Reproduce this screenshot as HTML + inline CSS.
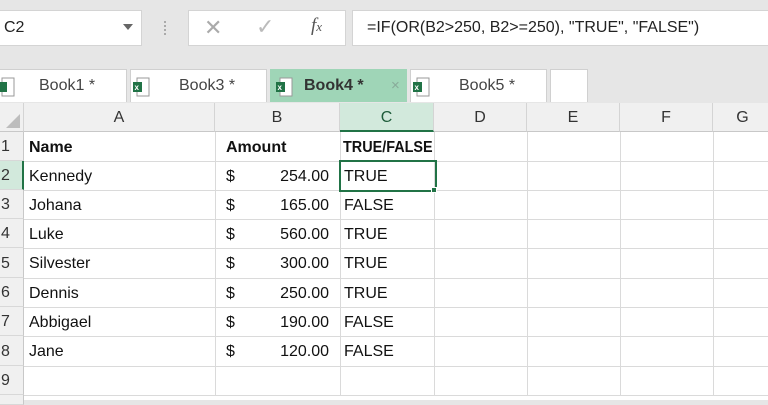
<!DOCTYPE html>
<html><head><style>
*{margin:0;padding:0;box-sizing:border-box}
body{width:768px;height:400px;overflow:hidden;background:#e6e6e6;font-family:"Liberation Sans",sans-serif;position:relative;color:#222}
.a{position:absolute}
.box{background:#fff;border:1px solid #d4d4d4}
.tab{position:absolute;top:69px;height:33px;background:#fff;border:1px solid #d0d0d0;border-bottom:none;font-size:16px;color:#444;line-height:32px}
.ic{position:absolute;top:7px;width:17px;height:20px}
.hdr{position:absolute;top:103px;height:29px;background:#f0f0f0;border-right:1px solid #d4d4d4;border-bottom:1px solid #c8c8c8;text-align:center;font-size:16px;line-height:29px;color:#333}
.rh{position:absolute;left:0;width:24px;background:#f0f0f0;border-right:1px solid #c8c8c8;border-bottom:1px solid #d8d8d8;font-size:16px;color:#333;padding-left:1px}
.vl{position:absolute;top:132px;width:1px;height:268px;background:#dadada}
.hl{position:absolute;left:24px;width:744px;height:1px;background:#dadada}
.t{position:absolute;font-size:16px;color:#111}
</style></head><body>
<div class="a box" style="left:-2px;top:10px;width:144px;height:36px;font-size:16px;line-height:34px;padding-left:5px;color:#222">C2</div>
<div class="a" style="left:123px;top:24px;width:0;height:0;border-left:5px solid transparent;border-right:5px solid transparent;border-top:6px solid #666"></div>
<div class="a" style="left:164px;top:21px;width:2px;height:14px;border-left:2px dotted #aaa"></div>
<div class="a box" style="left:188px;top:10px;width:158px;height:36px"></div>
<div class="a" style="left:204px;top:15px;font-size:22px;color:#aaa">✕</div>
<div class="a" style="left:256px;top:14px;font-size:22px;color:#bbb">✓</div>
<div class="a" style="left:311px;top:15px;font-size:19px;font-style:italic;font-family:'Liberation Serif',serif;color:#555">f<span style="font-size:13px">x</span></div>
<div class="a box" style="left:352px;top:10px;width:420px;height:36px;font-size:16px;line-height:34px;padding-left:14px;color:#222">=IF(OR(B2&gt;250, B2&gt;=250), "TRUE", "FALSE")</div>

<div class="tab" style="left:-3px;width:130px"><div class="ic" style="left:0"><svg width="17" height="20"><rect x="4" y="1" width="12" height="18" fill="#fff" stroke="#999"/><rect x="0" y="5" width="9" height="10" fill="#217346"/></svg></div><span style="position:absolute;left:41px">Book1 *</span></div>
<div class="tab" style="left:130px;width:137px"><div class="ic" style="left:2px"><svg width="17" height="20"><rect x="4" y="1" width="12" height="18" fill="#fff" stroke="#999"/><rect x="0" y="5" width="9" height="10" fill="#217346"/><text x="1.5" y="13" font-size="8" fill="#fff" font-weight="bold">x</text></svg></div><span style="position:absolute;left:48px">Book3 *</span></div>
<div class="tab" style="left:270px;width:137px;background:#9fd5b7;border-color:#9fd5b7;color:#333;font-weight:bold"><div class="ic" style="left:5px"><svg width="17" height="20"><rect x="4" y="1" width="12" height="18" fill="#fff" stroke="#999"/><rect x="0" y="5" width="9" height="10" fill="#217346"/><text x="1.5" y="13" font-size="8" fill="#fff" font-weight="bold">x</text></svg></div><span style="position:absolute;left:33px">Book4 *</span><span style="position:absolute;left:120px;font-weight:normal;color:#8a9;font-size:15px">×</span></div>
<div class="tab" style="left:410px;width:137px"><div class="ic" style="left:2px"><svg width="17" height="20"><rect x="4" y="1" width="12" height="18" fill="#fff" stroke="#999"/><rect x="0" y="5" width="9" height="10" fill="#217346"/><text x="1.5" y="13" font-size="8" fill="#fff" font-weight="bold">x</text></svg></div><span style="position:absolute;left:48px">Book5 *</span></div>
<div class="tab" style="left:550px;width:38px"></div>

<div class="a" style="left:0;top:132px;width:768px;height:268px;background:#fff"></div>
<div class="hdr" style="left:0;width:24px"><div style="position:absolute;right:3px;bottom:3px;width:0;height:0;border-left:14px solid transparent;border-bottom:14px solid #bdbdbd"></div></div>
<div class="hdr" style="left:24px;width:191px">A</div>
<div class="hdr" style="left:215px;width:125px">B</div>
<div class="hdr" style="left:340px;width:94px;background:#d2e9dc;border-bottom:2px solid #217346;color:#1e5c3a">C</div>
<div class="hdr" style="left:434px;width:93px">D</div>
<div class="hdr" style="left:527px;width:93px">E</div>
<div class="hdr" style="left:620px;width:93px">F</div>
<div class="hdr" style="left:713px;width:60px">G</div>

<div class="vl" style="left:215px"></div><div class="vl" style="left:340px"></div><div class="vl" style="left:434px"></div><div class="vl" style="left:527px"></div><div class="vl" style="left:620px"></div><div class="vl" style="left:713px"></div>
<div class="hl" style="top:161px"></div><div class="hl" style="top:190px"></div><div class="hl" style="top:219px"></div><div class="hl" style="top:248px"></div><div class="hl" style="top:278px"></div><div class="hl" style="top:307px"></div><div class="hl" style="top:336px"></div><div class="hl" style="top:366px"></div><div class="hl" style="top:395px"></div>

<div class="rh" style="top:132px;height:29px;line-height:30px">1</div>
<div class="rh" style="top:161px;height:29px;line-height:30px;background:#d2e9dc;border-right:2px solid #217346">2</div>
<div class="rh" style="top:190px;height:29px;line-height:30px">3</div>
<div class="rh" style="top:219px;height:29px;line-height:30px">4</div>
<div class="rh" style="top:248px;height:30px;line-height:31px">5</div>
<div class="rh" style="top:278px;height:29px;line-height:30px">6</div>
<div class="rh" style="top:307px;height:29px;line-height:30px">7</div>
<div class="rh" style="top:336px;height:30px;line-height:31px">8</div>
<div class="rh" style="top:366px;height:29px;line-height:30px">9</div>
<div class="rh" style="top:395px;height:10px"></div>
<div class="a" style="left:25px;top:396px;width:743px;height:4px;background:#fff"></div>

<div class="t" style="left:29px;top:139px;font-weight:bold">Name</div>
<div class="t" style="left:226px;top:139px;font-weight:bold">Amount</div>
<div class="t" style="left:343px;top:139px;font-weight:bold;transform:scaleX(0.9);transform-origin:left">TRUE/FALSE</div>

<div class="a" style="left:339px;top:160px;width:98px;height:32px;border:2px solid #217346"></div>
<div class="a" style="left:431px;top:187px;width:6px;height:6px;background:#217346;border:1px solid #fff"></div>

<div class="t" style="left:29px;top:168px">Kennedy</div><div class="t" style="left:226px;top:168px">$</div><div class="t" style="left:270px;top:168px;width:59px;text-align:right">254.00</div><div class="t" style="left:344px;top:168px">TRUE</div>
<div class="t" style="left:29px;top:197px">Johana</div><div class="t" style="left:226px;top:197px">$</div><div class="t" style="left:270px;top:197px;width:59px;text-align:right">165.00</div><div class="t" style="left:344px;top:197px">FALSE</div>
<div class="t" style="left:29px;top:226px">Luke</div><div class="t" style="left:226px;top:226px">$</div><div class="t" style="left:270px;top:226px;width:59px;text-align:right">560.00</div><div class="t" style="left:344px;top:226px">TRUE</div>
<div class="t" style="left:29px;top:255px">Silvester</div><div class="t" style="left:226px;top:255px">$</div><div class="t" style="left:270px;top:255px;width:59px;text-align:right">300.00</div><div class="t" style="left:344px;top:255px">TRUE</div>
<div class="t" style="left:29px;top:285px">Dennis</div><div class="t" style="left:226px;top:285px">$</div><div class="t" style="left:270px;top:285px;width:59px;text-align:right">250.00</div><div class="t" style="left:344px;top:285px">TRUE</div>
<div class="t" style="left:29px;top:314px">Abbigael</div><div class="t" style="left:226px;top:314px">$</div><div class="t" style="left:270px;top:314px;width:59px;text-align:right">190.00</div><div class="t" style="left:344px;top:314px">FALSE</div>
<div class="t" style="left:29px;top:343px">Jane</div><div class="t" style="left:226px;top:343px">$</div><div class="t" style="left:270px;top:343px;width:59px;text-align:right">120.00</div><div class="t" style="left:344px;top:343px">FALSE</div>
</body></html>
